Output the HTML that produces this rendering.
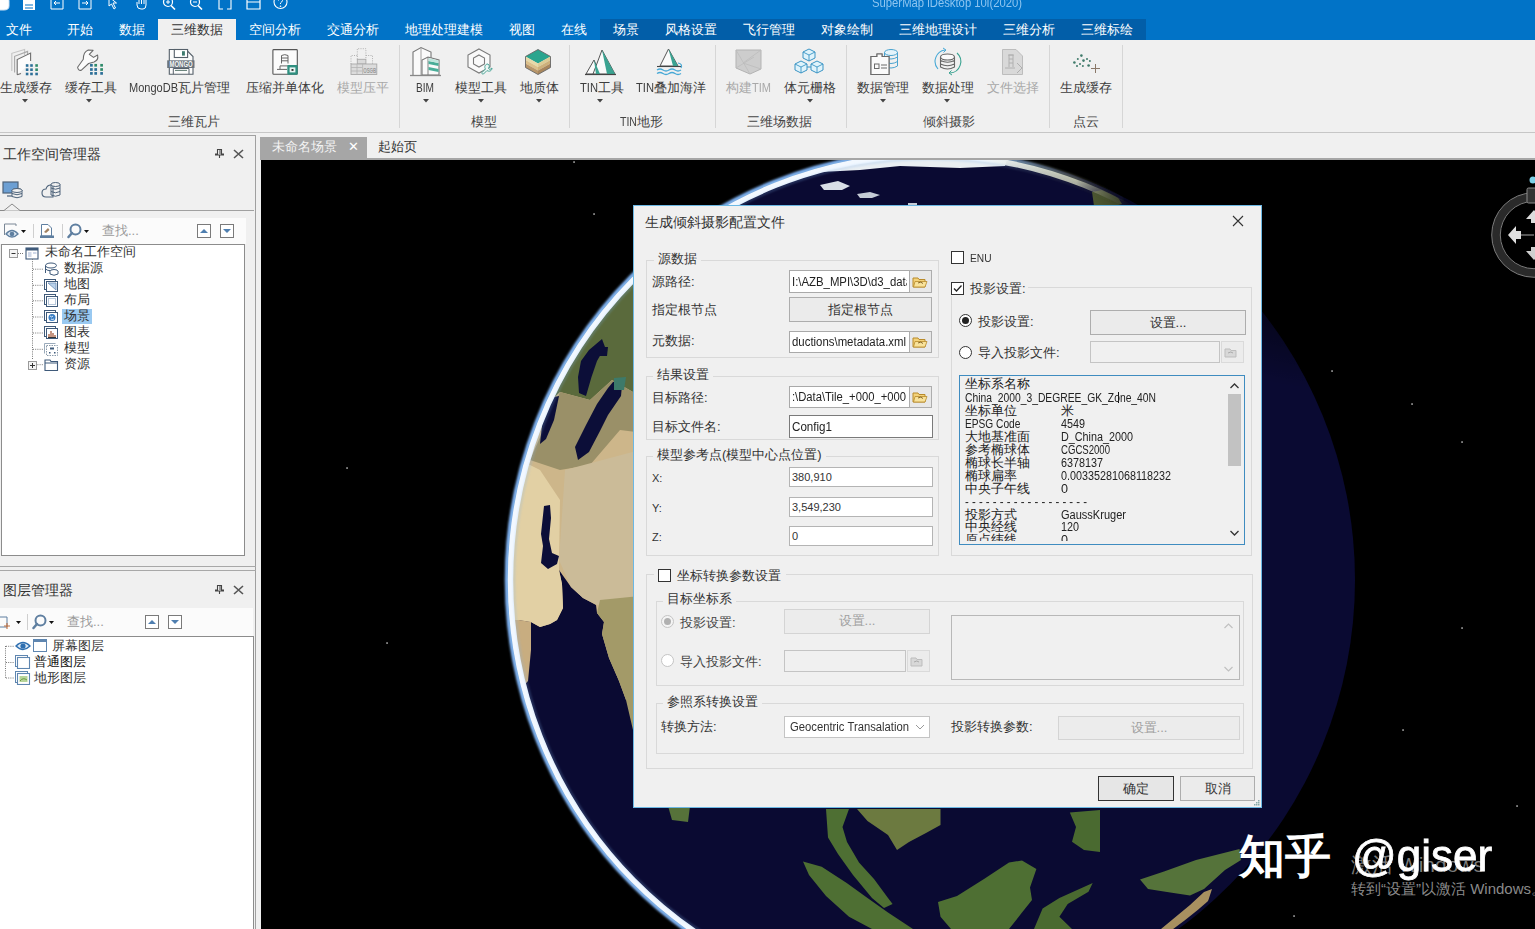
<!DOCTYPE html>
<html><head><meta charset="utf-8">
<style>
html,body{margin:0;padding:0;}
body{width:1535px;height:929px;overflow:hidden;position:relative;background:#f0f0f0;font-family:"Liberation Sans",sans-serif;font-size:13px;color:#333;}
.a{position:absolute;white-space:nowrap;}
.t{position:absolute;white-space:nowrap;height:20px;line-height:20px;}
.mw{color:#fff;font-size:13px;}
.rl{color:#3c3c3c;font-size:13px;}
.gl{color:#444;font-size:13px;}
.dis{color:#a8a8a8;}
.sep{position:absolute;width:1px;background:#d6d6d6;top:45px;height:83px;}
</style></head><body>

<!-- title bar + menu -->
<div class="a" style="left:0;top:0;width:1535px;height:40px;background:#0173c7;"></div>
<div class="a" style="left:600px;top:19px;width:546px;height:21px;background:#025ea8;"></div>
<div class="a" style="left:158px;top:19px;width:78px;height:21px;background:#f0f0f0;"></div>
<div class="t" style="left:872px;top:-7.5px;color:#8ec5f0;font-size:12px;"><span style="display:inline-block;width:150px;font-size:12px;vertical-align:baseline"><span style="display:inline-block;transform:scaleX(0.941);transform-origin:0 0">SuperMap iDesktop 10i(2020)</span></span></div>

<div id="menu">
<div class="t mw" style="left:6px;top:20px;">文件</div>
<div class="t mw" style="left:67px;top:20px;">开始</div>
<div class="t mw" style="left:119px;top:20px;">数据</div>
<div class="t" style="left:171px;top:20px;color:#333;">三维数据</div>
<div class="t mw" style="left:249px;top:20px;">空间分析</div>
<div class="t mw" style="left:327px;top:20px;">交通分析</div>
<div class="t mw" style="left:405px;top:20px;">地理处理建模</div>
<div class="t mw" style="left:509px;top:20px;">视图</div>
<div class="t mw" style="left:561px;top:20px;">在线</div>
<div class="t mw" style="left:613px;top:20px;">场景</div>
<div class="t mw" style="left:665px;top:20px;">风格设置</div>
<div class="t mw" style="left:743px;top:20px;">飞行管理</div>
<div class="t mw" style="left:821px;top:20px;">对象绘制</div>
<div class="t mw" style="left:899px;top:20px;">三维地理设计</div>
<div class="t mw" style="left:1003px;top:20px;">三维分析</div>
<div class="t mw" style="left:1081px;top:20px;">三维标绘</div>
</div>

<!-- ribbon -->
<div class="a" style="left:0;top:132px;width:1535px;height:1px;background:#c6c6c6;"></div>
<div class="sep" style="left:399px;"></div>
<div class="sep" style="left:569px;"></div>
<div class="sep" style="left:715px;"></div>
<div class="sep" style="left:846px;"></div>
<div class="sep" style="left:1049px;"></div>
<div class="sep" style="left:1122px;"></div>

<div id="ribbon-labels">
<div class="t rl" style="left:0px;top:78px;">生成缓存</div>
<div class="t rl" style="left:65px;top:78px;">缓存工具</div>
<div class="t rl" style="left:129px;top:78px;"><span style="display:inline-block;width:49px;font-size:12px;vertical-align:baseline"><span style="display:inline-block;transform:scaleX(0.918);transform-origin:0 0">MongoDB</span></span>瓦片管理</div>
<div class="t rl" style="left:246px;top:78px;">压缩并单体化</div>
<div class="t rl dis" style="left:337px;top:78px;">模型压平</div>
<div class="t rl" style="left:416px;top:78px;"><span style="display:inline-block;width:18px;font-size:12px;vertical-align:baseline"><span style="display:inline-block;transform:scaleX(0.844);transform-origin:0 0">BIM</span></span></div>
<div class="t rl" style="left:455px;top:78px;">模型工具</div>
<div class="t rl" style="left:520px;top:78px;">地质体</div>
<div class="t rl" style="left:580px;top:78px;"><span style="display:inline-block;width:18px;font-size:12px;vertical-align:baseline"><span style="display:inline-block;transform:scaleX(0.931);transform-origin:0 0">TIN</span></span>工具</div>
<div class="t rl" style="left:636px;top:78px;"><span style="display:inline-block;width:18px;font-size:12px;vertical-align:baseline"><span style="display:inline-block;transform:scaleX(0.931);transform-origin:0 0">TIN</span></span>叠加海洋</div>
<div class="t rl dis" style="left:726px;top:78px;">构建<span style="display:inline-block;width:19px;font-size:12px;vertical-align:baseline"><span style="display:inline-block;transform:scaleX(0.920);transform-origin:0 0">TIM</span></span></div>
<div class="t rl" style="left:784px;top:78px;">体元栅格</div>
<div class="t rl" style="left:857px;top:78px;">数据管理</div>
<div class="t rl" style="left:922px;top:78px;">数据处理</div>
<div class="t rl dis" style="left:987px;top:78px;">文件选择</div>
<div class="t rl" style="left:1060px;top:78px;">生成缓存</div>

<div class="t gl" style="left:168px;top:112px;">三维瓦片</div>
<div class="t gl" style="left:471px;top:112px;">模型</div>
<div class="t gl" style="left:620px;top:112px;"><span style="display:inline-block;width:17px;font-size:12px;vertical-align:baseline"><span style="display:inline-block;transform:scaleX(0.879);transform-origin:0 0">TIN</span></span>地形</div>
<div class="t gl" style="left:747px;top:112px;">三维场数据</div>
<div class="t gl" style="left:923px;top:112px;">倾斜摄影</div>
<div class="t gl" style="left:1073px;top:112px;">点云</div>
</div>


<!-- left panels -->
<div class="a" style="left:0;top:134px;width:256px;height:795px;background:#f0f0f0;"></div>
<div class="a" style="left:255px;top:135px;width:1px;height:794px;background:#a0a0a0;"></div>
<div class="a" style="left:0;top:135px;width:256px;height:1px;background:#a0a0a0;"></div>
<div class="t" style="left:3px;top:144px;font-size:14px;color:#333;">工作空间管理器</div>
<div class="t" style="left:3px;top:580px;font-size:14px;color:#333;">图层管理器</div>
<div class="a" style="left:0;top:210px;width:254px;height:1px;background:#a0a0a0;"></div>
<div class="a" style="left:0;top:218px;width:246px;height:26px;background:#fbfbfb;"></div>
<div class="t" style="left:102px;top:221px;color:#9a9a9a;font-size:13px;">查找...</div>
<div class="a" style="left:1px;top:244px;width:242px;height:310px;background:#fff;border:1px solid #8c8c8c;"></div>
<div class="a" style="left:0;top:566px;width:256px;height:1px;background:#a8a8a8;"></div>
<div class="a" style="left:0;top:570px;width:256px;height:1px;background:#a8a8a8;"></div>
<div class="a" style="left:0;top:608px;width:253px;height:28px;background:#fbfbfb;"></div>
<div class="t" style="left:67px;top:612px;color:#9a9a9a;font-size:13px;">查找...</div>
<div class="a" style="left:-1px;top:636px;width:253px;height:300px;background:#fff;border:1px solid #8c8c8c;"></div>

<div id="tree1">
<div class="t" style="left:45px;top:242px;color:#333;">未命名工作空间</div>
<div class="t" style="left:64px;top:258px;color:#333;">数据源</div>
<div class="t" style="left:64px;top:274px;color:#333;">地图</div>
<div class="t" style="left:64px;top:290px;color:#333;">布局</div>
<div class="a" style="left:62px;top:309px;width:30px;height:15px;background:#99c9f1;"></div>
<div class="t" style="left:64px;top:306px;color:#333;">场景</div>
<div class="t" style="left:64px;top:322px;color:#333;">图表</div>
<div class="t" style="left:64px;top:338px;color:#333;">模型</div>
<div class="t" style="left:64px;top:354px;color:#333;">资源</div>
</div>
<div id="tree2">
<div class="t" style="left:52px;top:636px;color:#333;">屏幕图层</div>
<div class="t" style="left:34px;top:652px;color:#111;">普通图层</div>
<div class="t" style="left:34px;top:668px;color:#333;">地形图层</div>
</div>

<!-- doc tabs -->
<div class="a" style="left:256px;top:134px;width:1279px;height:26px;background:#f0f0f0;"></div>
<div class="a" style="left:260px;top:137px;width:107px;height:21px;background:#a6a6a6;"></div>
<div class="t" style="left:272px;top:137px;color:#f4f4f4;font-size:13px;">未命名场景</div>
<div class="t" style="left:348px;top:137px;color:#fff;font-size:13px;">✕</div>
<div class="t" style="left:378px;top:137px;color:#333;font-size:13px;">起始页</div>
<div class="a" style="left:260px;top:158px;width:1275px;height:2px;background:#a6a6a6;"></div>

<!-- scene -->
<div class="a" style="left:261px;top:160px;width:1274px;height:769px;background:#000;overflow:hidden;">
<svg width="1274" height="769" style="position:absolute;left:0;top:0">
    <defs>
    <clipPath id="gc"><ellipse cx="930" cy="580" rx="422" ry="427"/></clipPath>
    <clipPath id="gc2"><ellipse cx="930" cy="580" rx="425" ry="430"/></clipPath>
    <filter id="blr" x="-5%" y="-5%" width="110%" height="110%"><feGaussianBlur stdDeviation="1.3"/></filter>
    <radialGradient id="night" cx="1330" cy="140" r="250" gradientUnits="userSpaceOnUse">
    <stop offset="0" stop-color="#000" stop-opacity="1"/>
    <stop offset="0.4" stop-color="#000" stop-opacity="1"/>
    <stop offset="1" stop-color="#000" stop-opacity="0"/>
    </radialGradient>
    <radialGradient id="shade" cx="810" cy="580" r="620" gradientUnits="userSpaceOnUse">
    <stop offset="0.55" stop-color="#000" stop-opacity="0"/>
    <stop offset="1" stop-color="#000" stop-opacity="0.55"/>
    </radialGradient>
    <linearGradient id="atm" x1="980" y1="0" x2="1140" y2="0" gradientUnits="userSpaceOnUse">
    <stop offset="0" stop-color="#f2f8ff" stop-opacity="1"/>
    <stop offset="0.6" stop-color="#d8dcc0" stop-opacity="0.8"/>
    <stop offset="1" stop-color="#000" stop-opacity="0"/>
    </linearGradient>
    <linearGradient id="atm2" x1="980" y1="0" x2="1140" y2="0" gradientUnits="userSpaceOnUse">
    <stop offset="0" stop-color="#7fb3ec" stop-opacity="1"/>
    <stop offset="0.6" stop-color="#707860" stop-opacity="0.6"/>
    <stop offset="1" stop-color="#000" stop-opacity="0"/>
    </linearGradient>
    </defs>
    <g transform="translate(-261,-160)">
    <g fill="#fff"><rect x="573.4" y="161.4" width="1.3" height="1.3"/><rect x="593.4" y="213.4" width="1.3" height="1.3"/><rect x="346.4" y="467.4" width="1.3" height="1.3"/><rect x="386.4" y="642.4" width="1.3" height="1.3"/><rect x="1331.4" y="370.4" width="1.3" height="1.3"/><rect x="1411.4" y="403.4" width="1.3" height="1.3"/><rect x="1461.4" y="441.4" width="1.3" height="1.3"/><rect x="1461.4" y="627.4" width="1.3" height="1.3"/><rect x="1402.4" y="729.4" width="1.3" height="1.3"/><rect x="1516.4" y="805.4" width="1.3" height="1.3"/><rect x="1293.4" y="915.4" width="1.3" height="1.3"/></g>
    <ellipse cx="930" cy="580" rx="425" ry="430" fill="#0a0a32"/>
    <g clip-path="url(#gc)">
    <path d="M480 250 L700 230 L700 700 L626 700 L619 681 L609 658 L602 634 L604 622 L597 613 L596 605 L583 598 L571 587 L559 570 L562 584 L563 608 L557 620 L550 624 L540 627 L531 622 L519 620 L480 620 Z" fill="#cdb68a" /><path d="M480 440 L540 470 L560 500 L559 570 L562 584 L563 608 L557 620 L550 624 L540 627 L531 622 L519 620 L480 620 Z" fill="#e2d0a4" /><path d="M480 250 L700 230 L700 400 L640 396 L612 380 L590 400 L560 392 L530 420 L480 430 Z" fill="#5a6a3c" /><path d="M560 392 L590 400 L612 380 L640 396 L700 400 L700 440 L620 430 L590 465 L560 470 L530 460 Z" fill="#9a9068" /><path d="M565 470 L640 450 L700 450 L700 600 L620 600 L597 605 L583 598 L571 587 L559 560 Z" fill="#cbbb98" /><path d="M600 600 L700 590 L700 760 L640 760 L626 700 L619 681 L609 658 L602 634 L604 622 L597 613 Z" fill="#a39a68" /><path d="M480 620 L519 620 L531 622 L531 650 L528 681 L520 690 L480 690 Z" fill="#c8ad80" /><path d="M581 361 L589 350 L602 339 L605 347 L597 361 L591.5 377 L586 396 L579 393 L578 377 Z" fill="#0c0e38" /><path d="M600 347 L608 347 L607 356 L600 356 Z" fill="#0c0e38" /><path d="M613 382 L622.5 380 L621 396 L608 415 L600 431 L589 452 L578 460 L575 447 L586 425 L597 404 L608 388 Z" fill="#0c0e38" /><path d="M614 378 L626 377 L624 390 L614 390 Z" fill="#3d7a6a" /><path d="M548 398 L559 396 L554 420 L546 439 L540 444 L542 425 Z" fill="#0c0e38" /><path d="M544 506 L550 505 L551 518 L549 539 L552 553 L559 556 L557 564 L548 569 L541 563 L543 546 L541 534 Z" fill="#0c0e38" /><path d="M790 150 L1010 150 L1005 166 L960 168 L900 166 L860 170 L820 172 L790 170 Z" fill="#e9eef2" /><path d="M820 185 L838 181 L850 186 L842 190 L824 190 Z" fill="#d9dfe6" /><path d="M857 194 L870 192 L880 195 L872 198 L860 198 Z" fill="#c5ccd6" /><path d="M908 203 L917 203 L917 206 L908 206 Z" fill="#c5ccd6" /><path d="M1092 192 L1112 188 L1122 204 L1100 210 L1094 206 Z" fill="#4f5a32" /><path d="M668 806 L690 806 L688 822 L672 820 Z" fill="#56723a" /><path d="M857 809 L940.5 809 L940.5 825 L926 833 L909 842 L897 850 L888 835 L867.5 821 Z" fill="#6c7a40" /><path d="M826 809 L849 809 L842.5 827 L847 842 L859 862.5 L874 879 L888 898 L892.6 904 L884 908 L872 898 L853 875 L838 854 L828 837.5 Z" fill="#4e6f33" /><path d="M803 861.5 L821.7 866.7 L846.7 883 L867.5 898 L888 912.6 L913 929 L872 929 L849 916.7 L826 896 L809 875 Z" fill="#4e6f33" /><path d="M938 902 L957 896 L984 879 L1009 862.5 L1022 860.5 L1036.4 869 L1030 887.6 L1032 900 L1022 912.6 L1009 929 L951 929 L940.5 916.7 Z" fill="#4e6f33" /><path d="M1069.8 812.5 L1100 810 L1100 852 L1084 850 L1072 841.7 L1076 827 Z" fill="#4a6a30" /><path d="M1034 929 L1042.6 908.4 L1059.4 898 L1092.7 883 L1088.5 891.7 L1067.7 904 L1059.4 916.7 L1072 929 Z" fill="#4a6a30" /><path d="M1140 879.4 L1164 871.4 L1196 860 L1239.5 849 L1241 860 L1225 870 L1204 889 L1190 895.5 L1167 892 L1148 889 Z" fill="#55733a" /><path d="M1161 929 L1190 905 L1204 892 L1212 889 L1199 929 Z" fill="#a89060" />
    </g>
    <g clip-path="url(#gc2)">
    <rect x="480" y="140" width="900" height="820" fill="url(#night)"/>
    </g>
    <ellipse cx="930" cy="580" rx="423" ry="428" fill="none" stroke="url(#atm2)" stroke-width="4.5" filter="url(#blr)"/>
    <ellipse cx="930" cy="580" rx="419.5" ry="424.5" fill="none" stroke="url(#atm)" stroke-width="5.5"/>
    <ellipse cx="930" cy="580" rx="416" ry="421" fill="none" stroke="url(#atm2)" stroke-opacity="0.3" stroke-width="2" filter="url(#blr)"/>
    </g>
    </svg>
</div>
<!-- dialog -->
<div class="a" style="left:633px;top:205px;width:627px;height:601px;border:1px solid #6cb8e4;background:#f0f0f0;"></div>
<div class="t" style="left:645px;top:212.0px;font-size:14px;color:#333;">生成倾斜摄影配置文件</div>
<svg class="a" style="left:1232px;top:215px" width="12" height="12"><path d="M1 1L11 11M11 1L1 11" stroke="#333" stroke-width="1.1"/></svg>
<div class="a" style="left:646px;top:260px;width:291px;height:96px;border:1px solid #d9d9d9;background:transparent;"></div>
<div class="t" style="left:654px;top:249px;font-size:13px;color:#333;background:#f0f0f0;padding:0 4px;">源数据</div>
<div class="t" style="left:652px;top:272.0px;font-size:13px;color:#333;">源路径:</div>
<div class="a" style="left:789px;top:270px;width:119px;height:21px;border:1px solid #a9a9a9;background:#fff;"></div>
<div class="t" style="left:792px;top:272px;width:115px;overflow:hidden;font-size:12px;color:#222;"><span style="display:inline-block;width:120px;font-size:12px;vertical-align:baseline"><span style="display:inline-block;transform:scaleX(0.947);transform-origin:0 0">I:\AZB_MPI\3D\d3_data</span></span></div>
<div class="a" style="left:909px;top:270px;width:21px;height:21px;border:1px solid #adadad;background:#e8e8e8;"></div>
<svg class="a" style="left:910px;top:271px;" width="20" height="20" viewBox="0 0 20 20"><path d="M3 7 H8 L9 8.5 H15 V16 H3 Z" fill="#f3d27a" stroke="#b88a2a"/><path d="M3.5 16 L5 10.5 H17 L15 16 Z" fill="#f8e29a" stroke="#b88a2a" stroke-width="0.8"/><path d="M8 12 Q11 10 13 12.5" stroke="#7a5a20" fill="none" stroke-width="0.9"/></svg>
<div class="t" style="left:652px;top:299.5px;font-size:13px;color:#333;">指定根节点</div>
<div class="a" style="left:789px;top:297px;width:141px;height:23px;border:1px solid #adadad;background:#ebebeb;"></div>
<div class="t" style="left:789px;top:300px;width:143px;text-align:center;font-size:13px;color:#333;">指定根节点</div>
<div class="t" style="left:652px;top:330.5px;font-size:13px;color:#333;">元数据:</div>
<div class="a" style="left:789px;top:331px;width:119px;height:20px;border:1px solid #a9a9a9;background:#fff;"></div>
<div class="t" style="left:792px;top:332px;width:115px;overflow:hidden;font-size:12px;color:#222;"><span style="display:inline-block;width:114px;font-size:12px;vertical-align:baseline"><span style="display:inline-block;transform:scaleX(0.950);transform-origin:0 0">ductions\metadata.xml</span></span></div>
<div class="a" style="left:909px;top:331px;width:21px;height:20px;border:1px solid #adadad;background:#e8e8e8;"></div>
<svg class="a" style="left:910px;top:331px;" width="20" height="20" viewBox="0 0 20 20"><path d="M3 7 H8 L9 8.5 H15 V16 H3 Z" fill="#f3d27a" stroke="#b88a2a"/><path d="M3.5 16 L5 10.5 H17 L15 16 Z" fill="#f8e29a" stroke="#b88a2a" stroke-width="0.8"/><path d="M8 12 Q11 10 13 12.5" stroke="#7a5a20" fill="none" stroke-width="0.9"/></svg>
<div class="a" style="left:646px;top:376px;width:291px;height:62px;border:1px solid #d9d9d9;background:transparent;"></div>
<div class="t" style="left:653px;top:365px;font-size:13px;color:#333;background:#f0f0f0;padding:0 4px;">结果设置</div>
<div class="t" style="left:652px;top:388.0px;font-size:13px;color:#333;">目标路径:</div>
<div class="a" style="left:789px;top:386px;width:119px;height:20px;border:1px solid #a9a9a9;background:#fff;"></div>
<div class="t" style="left:792px;top:387px;width:115px;overflow:hidden;font-size:12px;color:#222;"><span style="display:inline-block;width:114px;font-size:12px;vertical-align:baseline"><span style="display:inline-block;transform:scaleX(0.937);transform-origin:0 0">:\Data\Tile_+000_+000</span></span></div>
<div class="a" style="left:909px;top:386px;width:21px;height:20px;border:1px solid #adadad;background:#e8e8e8;"></div>
<svg class="a" style="left:910px;top:386px;" width="20" height="20" viewBox="0 0 20 20"><path d="M3 7 H8 L9 8.5 H15 V16 H3 Z" fill="#f3d27a" stroke="#b88a2a"/><path d="M3.5 16 L5 10.5 H17 L15 16 Z" fill="#f8e29a" stroke="#b88a2a" stroke-width="0.8"/><path d="M8 12 Q11 10 13 12.5" stroke="#7a5a20" fill="none" stroke-width="0.9"/></svg>
<div class="t" style="left:652px;top:416.5px;font-size:13px;color:#333;">目标文件名:</div>
<div class="a" style="left:789px;top:415px;width:142px;height:21px;border:1px solid #7a7a7a;background:#fff;"></div>
<div class="t" style="left:792px;top:417px;font-size:12px;color:#222;"><span style="display:inline-block;width:40px;font-size:12px;vertical-align:baseline"><span style="display:inline-block;transform:scaleX(0.967);transform-origin:0 0">Config1</span></span></div>
<div class="a" style="left:646px;top:456px;width:291px;height:98px;border:1px solid #d9d9d9;background:transparent;"></div>
<div class="t" style="left:653px;top:445px;font-size:13px;color:#333;background:#f0f0f0;padding:0 4px;">模型参考点(模型中心点位置)</div>
<div class="t" style="left:652px;top:468.0px;font-size:11px;color:#333;">X:</div>
<div class="a" style="left:789px;top:467px;width:142px;height:18px;border:1px solid #b4b4b4;background:#fff;"></div>
<div class="t" style="left:792px;top:467px;font-size:11px;color:#333;">380,910</div>
<div class="t" style="left:652px;top:498.0px;font-size:11px;color:#333;">Y:</div>
<div class="a" style="left:789px;top:497px;width:142px;height:18px;border:1px solid #b4b4b4;background:#fff;"></div>
<div class="t" style="left:792px;top:497px;font-size:11px;color:#333;">3,549,230</div>
<div class="t" style="left:652px;top:526.5px;font-size:11px;color:#333;">Z:</div>
<div class="a" style="left:789px;top:526px;width:142px;height:18px;border:1px solid #b4b4b4;background:#fff;"></div>
<div class="t" style="left:792px;top:526px;font-size:11px;color:#333;">0</div>
<div class="a" style="left:951px;top:251px;width:11px;height:11px;border:1px solid #333;background:#fff;"></div>
<div class="t" style="left:970px;top:248.0px;font-size:11px;color:#333;"><span style="display:inline-block;width:21.5px;font-size:11px;vertical-align:baseline"><span style="display:inline-block;transform:scaleX(0.926);transform-origin:0 0">ENU</span></span></div>
<div class="a" style="left:951px;top:287px;width:299px;height:267px;border:1px solid #d9d9d9;background:transparent;"></div>
<div class="a" style="left:948px;top:278px;width:80px;height:18px;background:#f0f0f0;"></div>
<div class="a" style="left:951px;top:282px;width:11px;height:11px;border:1px solid #333;background:#fff;"></div>
<svg class="a" style="left:952px;top:283px" width="11" height="11"><path d="M2 5.5L4.5 8L9.5 2.5" stroke="#222" stroke-width="1.3" fill="none"/></svg>
<div class="t" style="left:970px;top:279.0px;font-size:13px;color:#333;">投影设置:</div>
<div class="a" style="left:959px;top:314px;width:11px;height:11px;border:1px solid #333;border-radius:50%;background:#fff;"></div>
<div class="a" style="left:962px;top:317px;width:7px;height:7px;border-radius:50%;background:#222;"></div>
<div class="t" style="left:978px;top:312.0px;font-size:13px;color:#333;">投影设置:</div>
<div class="a" style="left:1090px;top:310px;width:154px;height:23px;border:1px solid #adadad;background:#ebebeb;"></div>
<div class="t" style="left:1090px;top:313px;width:156px;text-align:center;font-size:13px;color:#333;">设置...</div>
<div class="a" style="left:959px;top:346px;width:11px;height:11px;border:1px solid #333;border-radius:50%;background:#fff;"></div>
<div class="t" style="left:978px;top:343.0px;font-size:13px;color:#333;">导入投影文件:</div>
<div class="a" style="left:1090px;top:341px;width:128px;height:20px;border:1px solid #c4c4c4;background:#f0f0f0;"></div>
<div class="a" style="left:1221px;top:341px;width:21px;height:20px;border:1px solid #dadada;background:#ececec;"></div>
<svg class="a" style="left:1222px;top:342px;" width="20" height="20" viewBox="0 0 20 20"><path d="M3 7 H8 L9 8.5 H14 V15 H3 Z" fill="#d8d8d8" stroke="#bdbdbd"/><path d="M6 11 Q9 9 11 11" stroke="#aaa" fill="none"/></svg>
<div class="a" style="left:959px;top:375px;width:284px;height:168px;border:1px solid #3f8cc0;background:#f0f0f0;"></div>
<div class="a" style="left:1118px;top:392px;width:1px;height:11px;background:#111;"></div>
<div class="a" style="left:1228px;top:394px;width:13px;height:72px;background:#c2c2c2;"></div>
<svg class="a" style="left:1229px;top:381px" width="11" height="9"><path d="M1.5 7L5.5 3L9.5 7" stroke="#333" stroke-width="1.3" fill="none"/></svg>
<svg class="a" style="left:1229px;top:529px" width="11" height="9"><path d="M1.5 2L5.5 6L9.5 2" stroke="#333" stroke-width="1.3" fill="none"/></svg>
<div class="a" style="left:960px;top:376px;width:266px;height:165px;overflow:hidden;">
<div class="t" style="left:5px;top:-2.0px;font-size:13px;color:#222;letter-spacing:-0.1px">坐标系名称</div>
<div class="t" style="left:5px;top:12.0px;font-size:12px;color:#222;"><span style="display:inline-block;width:191px;font-size:12px;vertical-align:baseline"><span style="display:inline-block;transform:scaleX(0.860);transform-origin:0 0">China_2000_3_DEGREE_GK_Zone_40N</span></span></div>
<div class="t" style="left:5px;top:25.0px;font-size:13px;color:#222;letter-spacing:-0.1px">坐标单位</div>
<div class="t" style="left:101px;top:25.0px;font-size:13px;color:#222;">米</div>
<div class="t" style="left:5px;top:38.0px;font-size:12px;color:#222;"><span style="display:inline-block;width:55.4px;font-size:12px;vertical-align:baseline"><span style="display:inline-block;transform:scaleX(0.848);transform-origin:0 0">EPSG Code</span></span></div>
<div class="t" style="left:101px;top:38.0px;font-size:12px;color:#222;"><span style="display:inline-block;width:24px;font-size:12px;vertical-align:baseline"><span style="display:inline-block;transform:scaleX(0.899);transform-origin:0 0">4549</span></span></div>
<div class="t" style="left:5px;top:51.0px;font-size:13px;color:#222;letter-spacing:-0.1px">大地基准面</div>
<div class="t" style="left:101px;top:51.0px;font-size:12px;color:#222;"><span style="display:inline-block;width:72px;font-size:12px;vertical-align:baseline"><span style="display:inline-block;transform:scaleX(0.899);transform-origin:0 0">D_China_2000</span></span></div>
<div class="t" style="left:5px;top:64.0px;font-size:13px;color:#222;letter-spacing:-0.1px">参考椭球体</div>
<div class="t" style="left:101px;top:64.0px;font-size:12px;color:#222;"><span style="display:inline-block;width:49px;font-size:12px;vertical-align:baseline"><span style="display:inline-block;transform:scaleX(0.799);transform-origin:0 0">CGCS2000</span></span></div>
<div class="t" style="left:5px;top:77.0px;font-size:13px;color:#222;letter-spacing:-0.1px">椭球长半轴</div>
<div class="t" style="left:101px;top:77.0px;font-size:12px;color:#222;"><span style="display:inline-block;width:42px;font-size:12px;vertical-align:baseline"><span style="display:inline-block;transform:scaleX(0.899);transform-origin:0 0">6378137</span></span></div>
<div class="t" style="left:5px;top:90.0px;font-size:13px;color:#222;letter-spacing:-0.1px">椭球扁率</div>
<div class="t" style="left:101px;top:90.0px;font-size:12px;color:#222;"><span style="display:inline-block;width:110px;font-size:12px;vertical-align:baseline"><span style="display:inline-block;transform:scaleX(0.898);transform-origin:0 0">0.00335281068118232</span></span></div>
<div class="t" style="left:5px;top:102.6px;font-size:13px;color:#222;letter-spacing:-0.1px">中央子午线</div>
<div class="t" style="left:101px;top:102.6px;font-size:12px;color:#222;"><span style="display:inline-block;width:7px;font-size:12px;vertical-align:baseline"><span style="display:inline-block;transform:scaleX(1.049);transform-origin:0 0">0</span></span></div>
<div class="t" style="left:5px;top:116.0px;font-size:12px;color:#222;"><span style="display:inline-block;width:122px;font-size:12px;vertical-align:baseline"><span style="display:inline-block;transform:scaleX(0.949);transform-origin:0 0">- - - - - - - - - - - - - - - - - -</span></span></div>
<div class="t" style="left:5px;top:128.5px;font-size:13px;color:#222;letter-spacing:-0.1px">投影方式</div>
<div class="t" style="left:101px;top:128.5px;font-size:12px;color:#222;"><span style="display:inline-block;width:65px;font-size:12px;vertical-align:baseline"><span style="display:inline-block;transform:scaleX(0.919);transform-origin:0 0">GaussKruger</span></span></div>
<div class="t" style="left:5px;top:141.0px;font-size:13px;color:#222;letter-spacing:-0.1px">中央经线</div>
<div class="t" style="left:101px;top:141.0px;font-size:12px;color:#222;"><span style="display:inline-block;width:18px;font-size:12px;vertical-align:baseline"><span style="display:inline-block;transform:scaleX(0.899);transform-origin:0 0">120</span></span></div>
<div class="t" style="left:5px;top:154.0px;font-size:13px;color:#222;letter-spacing:-0.1px">原点纬线</div>
<div class="t" style="left:101px;top:154.0px;font-size:12px;color:#222;"><span style="display:inline-block;width:7px;font-size:12px;vertical-align:baseline"><span style="display:inline-block;transform:scaleX(1.049);transform-origin:0 0">0</span></span></div>
</div>
<div class="a" style="left:646px;top:574px;width:605px;height:193px;border:1px solid #d9d9d9;background:transparent;"></div>
<div class="a" style="left:654px;top:566px;width:132px;height:16px;background:#f0f0f0;"></div>
<div class="a" style="left:658px;top:569px;width:11px;height:11px;border:1px solid #333;background:#fff;"></div>
<div class="t" style="left:677px;top:566.0px;font-size:13px;color:#333;">坐标转换参数设置</div>
<div class="a" style="left:656px;top:601px;width:586px;height:83px;border:1px solid #d9d9d9;background:transparent;"></div>
<div class="t" style="left:663px;top:589px;font-size:13px;color:#333;background:#f0f0f0;padding:0 4px;">目标坐标系</div>
<div class="a" style="left:661px;top:615px;width:11px;height:11px;border:1px solid #c4c4c4;border-radius:50%;background:#f4f4f4;"></div>
<div class="a" style="left:664px;top:618px;width:7px;height:7px;border-radius:50%;background:#b0b0b0;"></div>
<div class="t" style="left:680px;top:612.7px;font-size:13px;color:#444;">投影设置:</div>
<div class="a" style="left:784px;top:609px;width:144px;height:23px;border:1px solid #d4d4d4;background:#ececec;"></div>
<div class="t" style="left:784px;top:611px;width:146px;text-align:center;font-size:13px;color:#a0a0a0;">设置...</div>
<div class="a" style="left:661px;top:654px;width:11px;height:11px;border:1px solid #c4c4c4;border-radius:50%;background:#fff;"></div>
<div class="t" style="left:680px;top:652.0px;font-size:13px;color:#444;">导入投影文件:</div>
<div class="a" style="left:784px;top:650px;width:120px;height:20px;border:1px solid #c4c4c4;background:#f0f0f0;"></div>
<div class="a" style="left:907px;top:650px;width:21px;height:20px;border:1px solid #dadada;background:#ececec;"></div>
<svg class="a" style="left:908px;top:651px;" width="20" height="20" viewBox="0 0 20 20"><path d="M3 7 H8 L9 8.5 H14 V15 H3 Z" fill="#d8d8d8" stroke="#bdbdbd"/><path d="M6 11 Q9 9 11 11" stroke="#aaa" fill="none"/></svg>
<div class="a" style="left:951px;top:615px;width:287px;height:63px;border:1px solid #b8b8b8;background:#f0f0f0;"></div>
<svg class="a" style="left:1223px;top:621px" width="11" height="9"><path d="M1.5 7L5.5 3L9.5 7" stroke="#c0c0c0" stroke-width="1.2" fill="none"/></svg>
<svg class="a" style="left:1223px;top:665px" width="11" height="9"><path d="M1.5 2L5.5 6L9.5 2" stroke="#c0c0c0" stroke-width="1.2" fill="none"/></svg>
<div class="a" style="left:656px;top:703px;width:586px;height:49px;border:1px solid #d9d9d9;background:transparent;"></div>
<div class="t" style="left:663px;top:692px;font-size:13px;color:#333;background:#f0f0f0;padding:0 4px;">参照系转换设置</div>
<div class="t" style="left:661px;top:717.0px;font-size:13px;color:#333;">转换方法:</div>
<div class="a" style="left:784px;top:716px;width:144px;height:20px;border:1px solid #c4c4c4;background:#fff;"></div>
<div class="t" style="left:790px;top:717px;font-size:12px;color:#333;"><span style="display:inline-block;width:119px;font-size:12px;vertical-align:baseline"><span style="display:inline-block;transform:scaleX(0.939);transform-origin:0 0">Geocentric Transalation</span></span></div>
<svg class="a" style="left:914px;top:722px" width="12" height="10"><path d="M2 3L6 7L10 3" stroke="#999" stroke-width="1" fill="none"/></svg>
<div class="t" style="left:951px;top:717.0px;font-size:13px;color:#333;">投影转换参数:</div>
<div class="a" style="left:1058px;top:716px;width:180px;height:22px;border:1px solid #d4d4d4;background:#ececec;"></div>
<div class="t" style="left:1058px;top:718px;width:182px;text-align:center;font-size:13px;color:#a0a0a0;">设置...</div>
<div class="a" style="left:1098px;top:776px;width:74px;height:23px;border:1px solid #333;background:#e6e6e6;"></div>
<div class="t" style="left:1098px;top:779px;width:76px;text-align:center;font-size:13px;color:#333;">确定</div>
<div class="a" style="left:1180px;top:776px;width:73px;height:23px;border:1px solid #adadad;background:#ebebeb;"></div>
<div class="t" style="left:1180px;top:779px;width:75px;text-align:center;font-size:13px;color:#333;">取消</div>
<svg class="a" style="left:1253px;top:799px;" width="8" height="8" viewBox="0 0 8 8"><g fill="#8aa"><rect x="5" y="1" width="1.5" height="1.5"/><rect x="3" y="3" width="1.5" height="1.5"/><rect x="5" y="3" width="1.5" height="1.5"/><rect x="1" y="5" width="1.5" height="1.5"/><rect x="3" y="5" width="1.5" height="1.5"/><rect x="5" y="5" width="1.5" height="1.5"/></g></svg>
<!-- ICONS -->
<svg class="a" style="left:21.5px;top:99px;" width="6" height="4" viewBox="0 0 6 4"><path d="M0 0H6L3 3.5Z" fill="#444"/></svg>
<svg class="a" style="left:86.3px;top:99px;" width="6" height="4" viewBox="0 0 6 4"><path d="M0 0H6L3 3.5Z" fill="#444"/></svg>
<svg class="a" style="left:422.7px;top:99px;" width="6" height="4" viewBox="0 0 6 4"><path d="M0 0H6L3 3.5Z" fill="#444"/></svg>
<svg class="a" style="left:477.5px;top:99px;" width="6" height="4" viewBox="0 0 6 4"><path d="M0 0H6L3 3.5Z" fill="#444"/></svg>
<svg class="a" style="left:535.5px;top:99px;" width="6" height="4" viewBox="0 0 6 4"><path d="M0 0H6L3 3.5Z" fill="#444"/></svg>
<svg class="a" style="left:597.2px;top:99px;" width="6" height="4" viewBox="0 0 6 4"><path d="M0 0H6L3 3.5Z" fill="#444"/></svg>
<svg class="a" style="left:806.5px;top:99px;" width="6" height="4" viewBox="0 0 6 4"><path d="M0 0H6L3 3.5Z" fill="#444"/></svg>
<svg class="a" style="left:880px;top:99px;" width="6" height="4" viewBox="0 0 6 4"><path d="M0 0H6L3 3.5Z" fill="#444"/></svg>
<svg class="a" style="left:944.3px;top:99px;" width="6" height="4" viewBox="0 0 6 4"><path d="M0 0H6L3 3.5Z" fill="#444"/></svg>
<svg class="a" style="left:10px;top:47px;" width="32" height="32" viewBox="0 0 32 32"><path d="M1.8 24 V6.3 L14.6 2.5 V8" fill="none" stroke="#c4c4c4" stroke-width="1.1"/><path d="M4.6 25.5 V9.3 L17.6 4.4 V9" fill="none" stroke="#a8a8a8" stroke-width="1.1"/><path d="M7.2 27.8 V12.5 L20.6 6.1 V16 L7.2 27.8 Z" fill="#fcfcfc" stroke="none"/><path d="M7.2 27.8 V12.5 L20.6 6.1 V14 M7.2 27.8 L11 26.5" fill="none" stroke="#6f6f6f" stroke-width="1.1"/><rect x="15.8" y="17.2" width="2.6" height="2.6" fill="#2c6f98"/><rect x="20.2" y="17.2" width="2.6" height="2.6" fill="#2c6f98"/><rect x="25.3" y="17.2" width="2.6" height="2.6" fill="#2f8a6a"/><rect x="15.8" y="21.4" width="2.6" height="2.6" fill="#2c6f98"/><rect x="20.2" y="21.4" width="2.6" height="2.6" fill="#2c6f98"/><rect x="25.3" y="21.4" width="2.6" height="2.6" fill="#2f8a6a"/><rect x="15.8" y="25.7" width="2.6" height="2.6" fill="#2c6f98"/><rect x="20.2" y="25.7" width="2.6" height="2.6" fill="#2c6f98"/><rect x="25.3" y="25.7" width="2.6" height="2.6" fill="#2c6f98"/></svg>
<svg class="a" style="left:74px;top:47px;" width="32" height="32" viewBox="0 0 32 32"><path d="M9.3 12.3 Q9.2 4.8 14.2 2.9 L19.1 3.3 L15.3 7.4 L19.5 10.4 L23.6 8 Q24.8 13 20 15 L14.6 16.5 L7.4 23.2 Q4.2 24.2 3.6 20.2 Z" fill="#fbfbfb" stroke="#6a6a6a" stroke-width="1.05" stroke-linejoin="round"/><rect x="16.049999999999997" y="16.95" width="2.7" height="2.7" fill="#2c6f98"/><rect x="20.349999999999998" y="16.95" width="2.7" height="2.7" fill="#2f8a6a"/><rect x="26.25" y="16.95" width="2.7" height="2.7" fill="#2f8a6a"/><rect x="16.049999999999997" y="21.15" width="2.7" height="2.7" fill="#2c6f98"/><rect x="20.349999999999998" y="21.15" width="2.7" height="2.7" fill="#2c6f98"/><rect x="26.25" y="21.15" width="2.7" height="2.7" fill="#2f8a6a"/><rect x="16.049999999999997" y="25.049999999999997" width="2.7" height="2.7" fill="#2c6f98"/><rect x="20.349999999999998" y="25.049999999999997" width="2.7" height="2.7" fill="#2c6f98"/><rect x="26.25" y="25.049999999999997" width="2.7" height="2.7" fill="#2c6f98"/></svg>
<svg class="a" style="left:165px;top:47px;" width="32" height="32" viewBox="0 0 32 32"><path d="M4.3 2.5 H21 L28 9.5 V27.3 H4.3 Z" fill="#fbfbfb" stroke="#55606a" stroke-width="1.1"/><rect x="9.3" y="2.5" width="13.3" height="8" fill="#fff" stroke="#55606a" stroke-width="1.1"/><rect x="17" y="4.2" width="2.9" height="4.4" fill="#3d7a6e"/><rect x="2.2" y="13.3" width="27.3" height="7.7" fill="#6a747e"/><text x="4.6" y="20.3" font-family="Liberation Sans" font-weight="bold" font-size="8.6" fill="#f4f4f4" textLength="23" lengthAdjust="spacingAndGlyphs">MONGO</text><path d="M8.3 27.3 V21.5 H24 V27.3" fill="none" stroke="#55606a" stroke-width="1"/><path d="M10 23.4 H22" stroke="#4a6a60" stroke-width="0.9"/></svg>
<svg class="a" style="left:270px;top:47px;" width="32" height="32" viewBox="0 0 32 32"><rect x="2.9" y="2.6" width="24.4" height="24.6" rx="0.8" fill="#fbfbfb" stroke="#555" stroke-width="1.1"/><path d="M11.5 16.5 V8.5 Q14.8 6.8 18 8.5 V16.5 M11.5 11 H18 M11.5 13.8 H18 M10 18.9 H19 M10 18.9 V22.4 M7 22.4 H17" fill="none" stroke="#666" stroke-width="1"/><rect x="17.3" y="18.1" width="10.4" height="9.6" rx="1" fill="#2f9080"/><rect x="19.6" y="20.4" width="5.8" height="5" fill="#e8f4f2"/><rect x="21.5" y="22" width="2" height="1.9" fill="#333"/></svg>
<svg class="a" style="left:348px;top:47px;" width="32" height="32" viewBox="0 0 32 32"><path d="M3 17 V8.5 H9.3 M9.3 12.3 V1.7 H17.9 V12.3 M17.9 8.5 H24.5 V17" stroke="#b0b0b0" stroke-width="1" stroke-dasharray="1 1.3" fill="none"/><rect x="9.3" y="12.3" width="8.6" height="4.7" fill="#dadada" stroke="#a8a8a8" stroke-width="0.9"/><rect x="3" y="17" width="25.8" height="10.5" fill="#dcdcdc" stroke="#a8a8a8" stroke-width="0.9"/><path d="M3 20.5 H14 M3 24 H14 M9 17 V27.5 M14.6 17 V27.5" stroke="#b4b4b4" stroke-width="0.8"/><text x="15.2" y="26.3" font-family="Liberation Sans" font-weight="bold" font-size="8" fill="#9a9a9a" textLength="13" lengthAdjust="spacingAndGlyphs">OSGB</text></svg>
<svg class="a" style="left:409px;top:46px;" width="33" height="33" viewBox="0 0 33 33"><path d="M4 29 V6 L12 1.5 L22 6 V29" fill="#fafafa" stroke="#777" stroke-width="1.1"/><path d="M12 1.5 V29" stroke="#999" stroke-width="0.9"/><path d="M13 29 V14 L19 11 L30 14 V29 Z" fill="#fafafa" stroke="#777" stroke-width="1.1"/><path d="M19 11 V29" stroke="#777" stroke-width="0.9"/><path d="M19.5 15 L29.5 17 V20 L19.5 18 Z M19.5 21 L29.5 23 V26 L19.5 24 Z" fill="#49ad98"/><path d="M19.5 12 L29.5 14.5 V17 L19.5 15 Z" fill="#bfe6dd"/><path d="M1 29.5 H32" stroke="#888" stroke-width="1.3"/></svg>
<svg class="a" style="left:465px;top:47px;" width="32" height="32" viewBox="0 0 32 32"><path d="M14 2 L25 8 V20 L14 26 L3 20 V8 Z" fill="#fafafa" stroke="#7a7a7a" stroke-width="1.1"/><path d="M14 8 L19.5 11 V17 L14 20 L8.5 17 V11 Z" fill="none" stroke="#7a7a7a" stroke-width="1.1"/><path d="M23 17 C20 17 19 20 20.5 22 L17 25.5 C16.5 26.5 17.5 27.5 18.5 27 L22 23.5 C24 25 27 24 27 21 L25 22.5 L23.5 21.5 L24.5 19 Z" fill="#eef6f4" stroke="#4aa597" stroke-width="1"/></svg>
<svg class="a" style="left:523px;top:47px;" width="32" height="32" viewBox="0 0 32 32"><path d="M15 2.5 L27.5 9.5 L15 16.5 L2.5 9.5 Z" fill="#2aa58e"/><path d="M2.5 9.5 L15 16.5 V20 L2.5 13 Z" fill="#e6d9a8"/><path d="M27.5 9.5 L15 16.5 V20 L27.5 13 Z" fill="#dccb94"/><path d="M2.5 13 L15 20 V23.5 L2.5 16.5 Z" fill="#dcc08a"/><path d="M27.5 13 L15 20 V23.5 L27.5 16.5 Z" fill="#cdb07a"/><path d="M2.5 16.5 L15 23.5 V27.5 L2.5 20.5 Z" fill="#b8966a"/><path d="M27.5 16.5 L15 23.5 V27.5 L27.5 20.5 Z" fill="#a8865c"/><path d="M15 2.5 L27.5 9.5 V20.5 L15 27.5 L2.5 20.5 V9.5 Z" fill="none" stroke="#666" stroke-width="0.9"/></svg>
<svg class="a" style="left:585px;top:47px;" width="32" height="32" viewBox="0 0 32 32"><path d="M1 27 L9 13 L15 27 Z" fill="#fafafa" stroke="#555" stroke-width="1"/><path d="M8 27 L17 3 L30 27 Z" fill="#fafafa" stroke="#555" stroke-width="1"/><path d="M17 3 L30 27 H22 Z" fill="#3aa391"/><path d="M9 13 L15 27 H11 Z" fill="#3aa391"/><path d="M0 27.5 H31" stroke="#444" stroke-width="1.2"/></svg>
<svg class="a" style="left:655px;top:47px;" width="32" height="32" viewBox="0 0 32 32"><path d="M5 19 L13.5 2 L23 19 Z" fill="#fafafa" stroke="#555" stroke-width="1"/><path d="M13.5 2 L23 19 H18 Z" fill="#3aa391"/><path d="M2 19.5 H26" stroke="#444" stroke-width="1.1"/><path d="M2 23 Q5 21 8 23 T14 23 T20 23 T26 23 M2 26.5 Q5 24.5 8 26.5 T14 26.5 T20 26.5 T26 26.5" stroke="#48a9d6" stroke-width="1.3" fill="none"/><path d="M23 16 Q28 17 26 21" stroke="#48a9d6" stroke-width="1.2" fill="none"/></svg>
<svg class="a" style="left:734px;top:47px;" width="32" height="32" viewBox="0 0 32 32"><path d="M2 3 H27 V22 L16 27 L2 21 Z" fill="#cdcdcd" stroke="#b3b3b3" stroke-width="1"/><path d="M2 3 L16 27 M27 3 L9 16 L27 22 M2 21 L20 10" stroke="#bdbdbd" stroke-width="0.8" fill="none"/></svg>
<svg class="a" style="left:794px;top:47px;" width="32" height="32" viewBox="0 0 32 32"><path d="M15 2 L21 5.0 V11.0 L15 14 L9 11.0 V5.0 Z" fill="#dff3fb" stroke="#3a94c4" stroke-width="1"/><path d="M9 5.0 L15 8 L21 5.0 M15 8 V14" stroke="#3a94c4" stroke-width="0.9" fill="none"/><path d="M7 14 L13 17.0 V23.0 L7 26 L1 23.0 V17.0 Z" fill="#dff3fb" stroke="#3a94c4" stroke-width="1"/><path d="M1 17.0 L7 20 L13 17.0 M7 20 V26" stroke="#3a94c4" stroke-width="0.9" fill="none"/><path d="M23 14 L29 17.0 V23.0 L23 26 L17 23.0 V17.0 Z" fill="#dff3fb" stroke="#3a94c4" stroke-width="1"/><path d="M17 17.0 L23 20 L29 17.0 M23 20 V26" stroke="#3a94c4" stroke-width="0.9" fill="none"/><path d="M13 20 H17" stroke="#3a94c4" stroke-width="1"/></svg>
<svg class="a" style="left:868px;top:47px;" width="32" height="32" viewBox="0 0 32 32"><path d="M3 9.5 H9 V7 H14 V9.5 H21 V27.5 H3 Z" fill="#fafafa" stroke="#6a6a6a" stroke-width="1.1"/><rect x="6.5" y="17" width="4.5" height="4.5" fill="none" stroke="#6a6a6a"/><path d="M13 18 H19 M13 21 H19" stroke="#6a6a6a"/><ellipse cx="23" cy="5.5" rx="6.5" ry="3" fill="#e4f4fb" stroke="#4aa3cf"/><path d="M16.5 5.5 V19 Q23 23 29.5 19 V5.5 M16.5 10 Q23 14 29.5 10 M16.5 14.5 Q23 18.5 29.5 14.5" fill="none" stroke="#4aa3cf"/><path d="M3 9.5 H9 V7 H14 V9.5 H21 V27.5 H3 Z" fill="#fafafa" stroke="#6a6a6a" stroke-width="1.1"/><rect x="6.5" y="17" width="4.5" height="4.5" fill="none" stroke="#6a6a6a"/><path d="M13 18 H19 M13 21 H19" stroke="#6a6a6a"/></svg>
<svg class="a" style="left:933px;top:47px;" width="32" height="32" viewBox="0 0 32 32"><ellipse cx="14.5" cy="10" rx="7" ry="3" fill="#fafafa" stroke="#666" stroke-width="1.1"/><path d="M7.5 10 V20 Q14.5 24 21.5 20 V10 M7.5 13.5 Q14.5 17 21.5 13.5 M7.5 17 Q14.5 20.5 21.5 17" fill="none" stroke="#666" stroke-width="1.1"/><path d="M5 22 A11.5 11.5 0 0 1 12 3" fill="none" stroke="#48a9d6" stroke-width="1.1"/><path d="M10 1 L13 3 L10.5 5.5" fill="none" stroke="#48a9d6"/><path d="M24 6 A11.5 11.5 0 0 1 17 26" fill="none" stroke="#3aa391" stroke-width="1.1"/><path d="M19 28 L16 26 L18.5 23.5" fill="none" stroke="#3aa391"/></svg>
<svg class="a" style="left:1000px;top:47px;" width="32" height="32" viewBox="0 0 32 32"><path d="M2.5 2.5 H16 L22.5 9 V27.5 H2.5 Z" fill="#d9d9d9" stroke="#bdbdbd" stroke-width="1"/><path d="M9 20 V8 H13 V20 M8 8 H14 M9 12 H13 M9 16 H13 M5 21 H15 M17 16 L22 21 L17 26" stroke="#b0b0b0" stroke-width="1" fill="none"/></svg>
<svg class="a" style="left:1071px;top:47px;" width="32" height="32" viewBox="0 0 32 32"><circle cx="10.4" cy="8.6" r="1.3" fill="#3f7a6a"/><circle cx="6.8" cy="12.1" r="1" fill="#3f7a6a"/><circle cx="12.5" cy="13.6" r="1.3" fill="#3f7a6a"/><circle cx="16.0" cy="12.0" r="1" fill="#3f7a6a"/><circle cx="18.9" cy="14.0" r="1" fill="#3f7a6a"/><circle cx="3.4" cy="15.5" r="1.3" fill="#3f7a6a"/><circle cx="9.0" cy="17.0" r="1" fill="#3f7a6a"/><circle cx="6.0" cy="18.9" r="1" fill="#3f7a6a"/><circle cx="11.9" cy="18.9" r="1" fill="#3f7a6a"/><circle cx="17.6" cy="18.5" r="1.3" fill="#3f7a6a"/><path d="M24.5 17 V26 M20 21.5 H29" stroke="#8a7868" stroke-width="1"/></svg>
<svg class="a" style="left:0px;top:0px;" width="12" height="12" viewBox="0 0 12 12"><path d="M-6 -4 H4 Q9 -4 9 1 V6 Q9 10 4 10 H-6 Z" fill="#fff" stroke="#cfe3f5"/></svg>
<svg class="a" style="left:22px;top:0px;" width="14" height="11" viewBox="0 0 14 11"><rect x="1" y="-3" width="12" height="13" fill="#fff"/><path d="M3 5H11 M3 8H11" stroke="#0173c7" stroke-width="1.2"/></svg>
<svg class="a" style="left:50px;top:0px;" width="14" height="10" viewBox="0 0 14 10"><path d="M1 -2 V9 H13 V-2" fill="none" stroke="#fff"/><path d="M10 3 H4 M6 1 L4 3 L6 5" stroke="#fff" fill="none"/></svg>
<svg class="a" style="left:78px;top:0px;" width="14" height="10" viewBox="0 0 14 10"><path d="M1 -2 V9 H13 V-2" fill="none" stroke="#fff"/><path d="M4 3 H10 M8 1 L10 3 L8 5" stroke="#fff" fill="none"/></svg>
<svg class="a" style="left:108px;top:0px;" width="11" height="10" viewBox="0 0 11 10"><path d="M1 -3 L1 6 L3.5 4 L6 9 L7.5 8 L5 3 L8.5 3 Z" fill="none" stroke="#fff"/></svg>
<svg class="a" style="left:135px;top:0px;" width="12" height="10" viewBox="0 0 12 10"><path d="M2 2 V5 Q2 9 6 9 H8 Q11 9 11 5 V-2 M4 -2 V4 M6.5 -3 V4 M9 -2 V4" fill="none" stroke="#fff"/></svg>
<svg class="a" style="left:162px;top:0px;" width="14" height="10" viewBox="0 0 14 10"><circle cx="6" cy="2" r="4.5" fill="none" stroke="#fff" stroke-width="1.2"/><path d="M9 5.5 L13 9.5" stroke="#fff" stroke-width="1.6"/><path d="M4 2 H8 M6 0 V4" stroke="#fff"/></svg>
<svg class="a" style="left:189px;top:0px;" width="14" height="10" viewBox="0 0 14 10"><circle cx="6" cy="2" r="4.5" fill="none" stroke="#fff" stroke-width="1.2"/><path d="M9 5.5 L13 9.5" stroke="#fff" stroke-width="1.6"/><path d="M4 2 H8" stroke="#fff"/></svg>
<svg class="a" style="left:218px;top:0px;" width="14" height="10" viewBox="0 0 14 10"><path d="M1 -2 V9 H5 M9 9 H13 V-2 M4 -1 H10" fill="none" stroke="#fff" stroke-width="1.1"/></svg>
<svg class="a" style="left:246px;top:0px;" width="15" height="10" viewBox="0 0 15 10"><path d="M1 -3 V9 H14 V-3 M1 2 H14" fill="none" stroke="#fff" stroke-width="1.2"/></svg>
<svg class="a" style="left:273px;top:0px;" width="15" height="10" viewBox="0 0 15 10"><circle cx="7.5" cy="2" r="6.5" fill="none" stroke="#fff" stroke-width="1.1"/><path d="M5.5 0.5 Q5.5 -2 7.5 -2 Q9.8 -2 9.5 0.5 Q9 2 7.5 3 V4" fill="none" stroke="#fff"/><circle cx="7.5" cy="6.2" r="0.8" fill="#fff"/></svg>
<!-- ICONS2 -->
<svg class="a" style="left:215px;top:149.0px;" width="9" height="9" viewBox="0 0 9 9"><path d="M2.5 0.5 H6.5 V5 H8.5 V6 H0.5 V5 H2.5 Z M4.5 6 V9" fill="none" stroke="#444" stroke-width="1.1"/><path d="M5 1 V5" stroke="#444"/></svg>
<svg class="a" style="left:233px;top:148.5px;" width="11" height="10" viewBox="0 0 11 10"><path d="M1 1 L10 9 M10 1 L1 9" stroke="#555" stroke-width="1.6"/></svg>
<svg class="a" style="left:215px;top:585.0px;" width="9" height="9" viewBox="0 0 9 9"><path d="M2.5 0.5 H6.5 V5 H8.5 V6 H0.5 V5 H2.5 Z M4.5 6 V9" fill="none" stroke="#444" stroke-width="1.1"/><path d="M5 1 V5" stroke="#444"/></svg>
<svg class="a" style="left:233px;top:584.5px;" width="11" height="10" viewBox="0 0 11 10"><path d="M1 1 L10 9 M10 1 L1 9" stroke="#555" stroke-width="1.6"/></svg>
<svg class="a" style="left:2px;top:181px;" width="22" height="19" viewBox="0 0 22 19"><rect x="1" y="1" width="15" height="11" fill="#6c9fd3" stroke="#4e637a" stroke-width="1.2"/><path d="M5 15 H11" stroke="#4e637a" stroke-width="1.2"/><ellipse cx="15" cy="9.5" rx="5" ry="2" fill="#f0f0f0" stroke="#4e637a"/><path d="M10 9.5 V15.5 Q15 18 20 15.5 V9.5 M10 12.5 Q15 15 20 12.5" fill="#f0f0f0" stroke="#4e637a"/><ellipse cx="15" cy="9.5" rx="5" ry="2" fill="#f0f0f0" stroke="#4e637a"/></svg>
<svg class="a" style="left:41px;top:181px;" width="21" height="18" viewBox="0 0 21 18"><path d="M5 16 Q1 16 1 12 Q1 8 5 8 Q6 4 10 4 L12 4 V16 Z" fill="none" stroke="#4e637a" stroke-width="1.1"/><ellipse cx="14.5" cy="3.5" rx="4.5" ry="2" fill="#f0f0f0" stroke="#4e637a"/><path d="M10 3.5 V14 Q14.5 16.5 19 14 V3.5 M10 7 Q14.5 9.5 19 7 M10 10.5 Q14.5 13 19 10.5" fill="none" stroke="#4e637a"/></svg>
<svg class="a" style="left:0px;top:203px;" width="40" height="9" viewBox="0 0 40 9"><path d="M0 7.5 H4 L12 1 L20 7.5 H40" fill="#f0f0f0" stroke="#8a8a8a" stroke-width="1"/></svg>
<svg class="a" style="left:3px;top:223px;" width="25" height="16" viewBox="0 0 25 16"><path d="M1.5 12 V1 H13 V3" fill="none" stroke="#7a8796"/><path d="M3 11 Q9 4 15 11 Q9 17 3 11 Z" fill="#dde8f2" stroke="#5f7fa0" stroke-width="1.3"/><circle cx="9" cy="11" r="2.3" fill="#5f7fa0"/><path d="M18 7 H23 L20.5 10 Z" fill="#111"/></svg>
<div class="a" style="left:33px;top:224px;width:1px;height:14px;background:#cfcfcf;"></div>
<svg class="a" style="left:39px;top:223px;" width="16" height="16" viewBox="0 0 16 16"><path d="M2.5 1.5 H9 L12.5 5 V13 H2.5 Z" fill="#fff" stroke="#5f7fa0"/><path d="M5 9 L9 5 L10.5 7 L7 10 Z" fill="#a08060"/><rect x="1" y="12.5" width="14" height="2.5" fill="#5f7fa0"/></svg>
<div class="a" style="left:62px;top:224px;width:1px;height:14px;background:#cfcfcf;"></div>
<svg class="a" style="left:67px;top:223px;" width="25" height="16" viewBox="0 0 25 16"><circle cx="8.5" cy="6.5" r="5" fill="none" stroke="#5f7fa0" stroke-width="2"/><path d="M5 10 L1.5 14" stroke="#5f7fa0" stroke-width="2.5" stroke-linecap="round"/><path d="M17 7 H22 L19.5 10 Z" fill="#111"/></svg>
<svg class="a" style="left:197px;top:224px;" width="14" height="14" viewBox="0 0 14 14"><rect x="0.5" y="0.5" width="13" height="13" fill="#fff" stroke="#7a7a7a"/><path d="M3 9 L7 5 L11 9 Z" fill="#4f7fb0"/></svg>
<svg class="a" style="left:220px;top:224px;" width="14" height="14" viewBox="0 0 14 14"><rect x="0.5" y="0.5" width="13" height="13" fill="#fff" stroke="#7a7a7a"/><path d="M3 5 L7 9 L11 5 Z" fill="#4f7fb0"/></svg>
<svg class="a" style="left:0px;top:614px;" width="22" height="16" viewBox="0 0 22 16"><path d="M-2 3 H7 V13 H-2" fill="none" stroke="#5f7fa0"/><path d="M4 12 H10 M7 9 V15" stroke="#c07040" stroke-width="1.1"/><path d="M16 7 H21 L18.5 10 Z" fill="#111"/></svg>
<div class="a" style="left:27px;top:614px;width:1px;height:16px;background:#cfcfcf;"></div>
<svg class="a" style="left:32px;top:614px;" width="25" height="16" viewBox="0 0 25 16"><circle cx="8.5" cy="6.5" r="5" fill="none" stroke="#5f7fa0" stroke-width="2"/><path d="M5 10 L1.5 14" stroke="#5f7fa0" stroke-width="2.5" stroke-linecap="round"/><path d="M17 7 H22 L19.5 10 Z" fill="#111"/></svg>
<svg class="a" style="left:145px;top:615px;" width="14" height="14" viewBox="0 0 14 14"><rect x="0.5" y="0.5" width="13" height="13" fill="#fff" stroke="#7a7a7a"/><path d="M3 9 L7 5 L11 9 Z" fill="#4f7fb0"/></svg>
<svg class="a" style="left:168px;top:615px;" width="14" height="14" viewBox="0 0 14 14"><rect x="0.5" y="0.5" width="13" height="13" fill="#fff" stroke="#7a7a7a"/><path d="M3 5 L7 9 L11 5 Z" fill="#4f7fb0"/></svg>
<svg class="a" style="left:8px;top:248px;" width="30" height="120" viewBox="0 0 30 120"><rect x="1.5" y="1.5" width="8" height="8" fill="#f4f4f4" stroke="#9a9a9a"/><path d="M3.5 5.5 H7.5" stroke="#333"/><path d="M10 5.5 H16" stroke="#777" stroke-dasharray="1 1"/></svg>
<svg class="a" style="left:24.5px;top:247px;" width="14" height="13" viewBox="0 0 14 13"><rect x="1" y="1" width="12" height="11" fill="#fff" stroke="#3f5a7a" stroke-width="1.1"/><rect x="1" y="1" width="12" height="2.5" fill="#3f5a7a"/><rect x="3" y="5" width="3.5" height="5" fill="#d0d8e8"/><rect x="8" y="5" width="3.5" height="2" fill="#d0d8e8"/></svg>
<svg class="a" style="left:0;top:0" width="60" height="380"><path d="M32.5 259 V360" stroke="#777" stroke-dasharray="1 1.2"/><path d="M33 269.2 H43" stroke="#777" stroke-dasharray="1 1.2"/><path d="M33 285.3 H43" stroke="#777" stroke-dasharray="1 1.2"/><path d="M33 300.8 H43" stroke="#777" stroke-dasharray="1 1.2"/><path d="M33 317.0 H43" stroke="#777" stroke-dasharray="1 1.2"/><path d="M33 333.0 H43" stroke="#777" stroke-dasharray="1 1.2"/><path d="M33 349.3 H43" stroke="#777" stroke-dasharray="1 1.2"/><path d="M33 364.7 H43" stroke="#777" stroke-dasharray="1 1.2"/></svg>
<svg class="a" style="left:28px;top:361px;" width="9" height="9" viewBox="0 0 9 9"><rect x="0.5" y="0.5" width="8" height="8" fill="#f4f4f4" stroke="#9a9a9a"/><path d="M2 4.5 H7 M4.5 2 V7" stroke="#333"/></svg>
<svg class="a" style="left:43.5px;top:262px;" width="15" height="14" viewBox="0 0 15 14"><ellipse cx="7" cy="3.5" rx="5.5" ry="2.5" fill="#fff" stroke="#3f5a7a"/><path d="M1.5 3.5 V11 M1.5 7 Q4 9 6 8.5" fill="none" stroke="#3f5a7a"/><ellipse cx="10" cy="9.5" rx="4" ry="2" fill="#fff" stroke="#3f5a7a"/><path d="M6 9.5 V12 Q10 14.5 14 12 V9.5" fill="#fff" stroke="#3f5a7a"/></svg>
<svg class="a" style="left:43.5px;top:278.5px;" width="15" height="14" viewBox="0 0 15 14"><rect x="0.5" y="0.5" width="11" height="10" fill="#fff" stroke="#3f5a7a"/><rect x="2.5" y="2.5" width="11" height="10" fill="#fff" stroke="#3f5a7a"/><path d="M4 4 L12 11 M4 4 H12 V11" fill="#b8d0ea" stroke="#6d90b8" stroke-width="0.8"/></svg>
<svg class="a" style="left:43.5px;top:294px;" width="15" height="14" viewBox="0 0 15 14"><rect x="0.5" y="0.5" width="11" height="10" fill="#fff" stroke="#3f5a7a"/><rect x="2.5" y="2.5" width="11" height="10" fill="#fff" stroke="#3f5a7a"/><rect x="4.5" y="4.5" width="7" height="6" fill="none" stroke="#6d90b8" stroke-dasharray="1 1"/></svg>
<svg class="a" style="left:43.5px;top:310px;" width="15" height="14" viewBox="0 0 15 14"><rect x="0.5" y="0.5" width="11" height="10" fill="#fff" stroke="#3f5a7a"/><rect x="2.5" y="2.5" width="11" height="10" fill="#fff" stroke="#3f5a7a"/><circle cx="8" cy="7.5" r="3.5" fill="#3b7fc4"/><path d="M6 6 Q8 8 9 6 M7 9 Q8 10 10 9" stroke="#fff" stroke-width="0.8" fill="none"/></svg>
<svg class="a" style="left:43.5px;top:326px;" width="15" height="14" viewBox="0 0 15 14"><rect x="0.5" y="0.5" width="11" height="10" fill="#fff" stroke="#3f5a7a"/><rect x="2.5" y="2.5" width="11" height="10" fill="#fff" stroke="#3f5a7a"/><path d="M5 11 V8 M7 11 V5 M9 11 V7 M11 11 V9" stroke="#a05030" stroke-width="1.2"/><path d="M4 11.5 H12" stroke="#333"/></svg>
<svg class="a" style="left:43.5px;top:342.5px;" width="15" height="14" viewBox="0 0 15 14"><path d="M0.5 10.5 V0.5 H11.5" fill="none" stroke="#9aaaba"/><rect x="2.5" y="2.5" width="11" height="10" fill="#fff" stroke="#8a9aaa" stroke-dasharray="1.5 1"/><rect x="6" y="4.5" width="4" height="2" fill="#3f5a7a"/><rect x="5" y="9" width="1.5" height="1.5" fill="#3f5a7a"/><rect x="10" y="9" width="1.5" height="1.5" fill="#3f5a7a"/></svg>
<svg class="a" style="left:43.5px;top:358px;" width="15" height="14" viewBox="0 0 15 14"><path d="M1 12.5 V2 H6 L7 3.5 H13.5 V12.5 Z" fill="#fff" stroke="#3f5a7a" stroke-width="1.1"/><path d="M1 5 H13.5" stroke="#3f5a7a"/></svg>
<svg class="a" style="left:0;top:0" width="20" height="700"><path d="M5.5 646 V678" stroke="#777" stroke-dasharray="1 1.2"/><path d="M6 646.3 H14" stroke="#777" stroke-dasharray="1 1.2"/><path d="M6 662.5 H14" stroke="#777" stroke-dasharray="1 1.2"/><path d="M6 678 H14" stroke="#777" stroke-dasharray="1 1.2"/></svg>
<svg class="a" style="left:15px;top:641px;" width="16" height="10" viewBox="0 0 16 10"><path d="M1 5 Q8 -2 15 5 Q8 12 1 5 Z" fill="#dce9f5" stroke="#2e6fb0" stroke-width="1.4"/><circle cx="8" cy="5" r="2.6" fill="#2e6fb0"/></svg>
<svg class="a" style="left:33px;top:639px;" width="15" height="14" viewBox="0 0 15 14"><rect x="0.5" y="0.5" width="13" height="12" fill="#fff" stroke="#5f86b0"/><rect x="0.5" y="0.5" width="13" height="2.5" fill="#5f86b0"/></svg>
<svg class="a" style="left:15px;top:655px;" width="16" height="14" viewBox="0 0 16 14"><rect x="0.5" y="0.5" width="12" height="11" fill="#fff" stroke="#5f86b0"/><rect x="2.5" y="2.5" width="12" height="11" fill="#fff" stroke="#5f86b0" stroke-width="1.1"/></svg>
<svg class="a" style="left:15px;top:671px;" width="16" height="14" viewBox="0 0 16 14"><rect x="0.5" y="0.5" width="12" height="11" fill="#fff" stroke="#5f86b0"/><rect x="2.5" y="2.5" width="12" height="11" fill="#fff" stroke="#5f86b0" stroke-width="1.1"/><rect x="4.5" y="5" width="8" height="6" fill="#b7d59a"/><path d="M5 10 Q8 6 12 9" stroke="#6a9a40" fill="none"/></svg>
<!-- extra -->
<svg class="a" style="left:1491px;top:176px;" width="44" height="104" viewBox="0 0 44 104"><circle cx="43" cy="59" r="38" fill="none" stroke="#2a2a2a" stroke-width="8"/><circle cx="43" cy="59" r="42.3" fill="none" stroke="#8a8a8a" stroke-width="0.9"/><circle cx="43" cy="59" r="33.7" fill="none" stroke="#8a8a8a" stroke-width="0.9"/><rect x="36" y="12" width="12" height="15" rx="1.5" fill="#333" stroke="#8a8a8a" stroke-width="1"/><circle cx="42" cy="4" r="3.5" fill="#7fd0e8"/><path d="M17 59 L25 50 V55 H30 V63 H25 V68 Z" fill="#e0e0e0"/><path d="M30 59 H43" stroke="#aaa" stroke-width="1"/><path d="M43 34 L35 43 H40 V47 H46 V43 H51 Z" fill="#dcdcdc"/><path d="M43 84 L35 75 H40 V71 H46 V75 H51 Z" fill="#cfcfcf"/></svg>
<div class="a" style="left:1351px;top:852px;font-size:21px;line-height:26px;color:#7a7a7a;">激活 Windows</div>
<div class="a" style="left:1351px;top:879px;font-size:15px;line-height:20px;color:#8a8a8a;">转到“设置”以激活 Windows。</div>
<div class="a" style="left:1239px;top:826px;font-size:46px;line-height:60px;color:#fff;font-weight:bold;">知乎</div>
<div class="a" style="left:1352px;top:826px;font-size:45px;line-height:60px;color:#fff;-webkit-text-stroke:0.8px #fff;"><span style="display:inline-block;width:140px;font-size:45px;vertical-align:baseline"><span style="display:inline-block;transform:scaleX(0.978);transform-origin:0 0">@giser</span></span></div>

</body></html>
